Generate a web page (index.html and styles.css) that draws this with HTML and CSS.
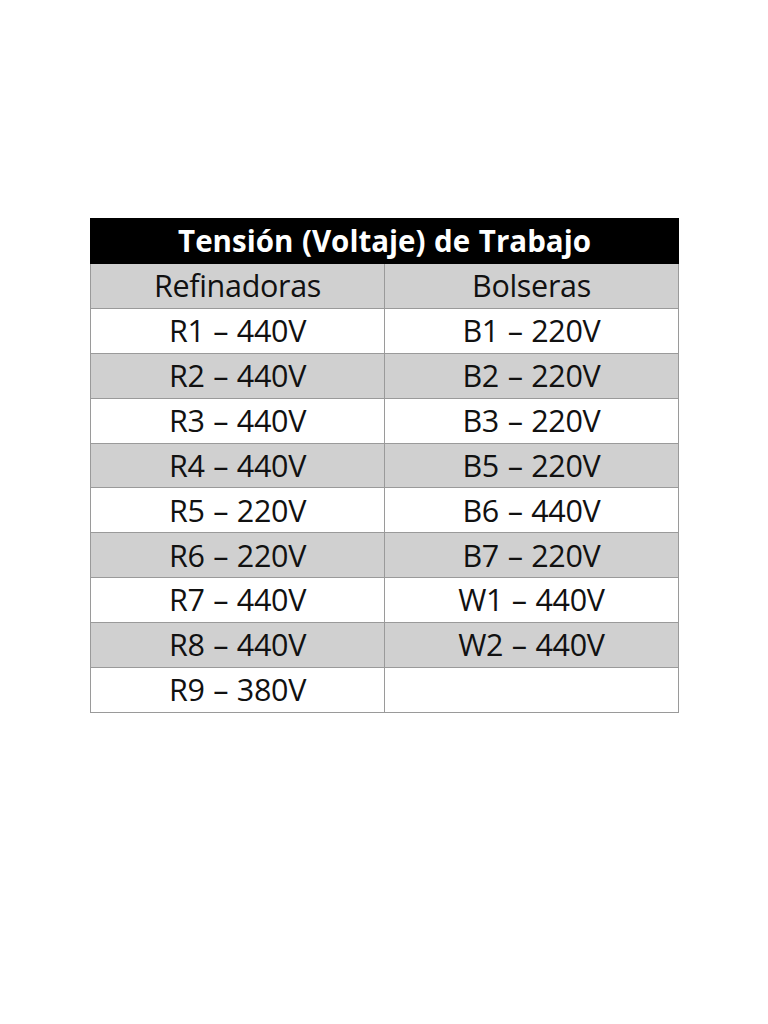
FILE: index.html
```html
<!DOCTYPE html>
<html lang="es">
<head>
<meta charset="utf-8">
<title>Tensión (Voltaje) de Trabajo</title>
<link rel="stylesheet" href="styles.css">
</head>
<body>
<div class="page">
<table class="volt">
  <thead>
    <tr class="title"><th colspan="2">Tensión (Voltaje) de Trabajo</th></tr>
  </thead>
  <tbody>
    <tr class="shade"><td>Refinadoras</td><td>Bolseras</td></tr>
    <tr><td>R1 – 440V</td><td>B1 – 220V</td></tr>
    <tr class="shade"><td>R2 – 440V</td><td>B2 – 220V</td></tr>
    <tr><td>R3 – 440V</td><td>B3 – 220V</td></tr>
    <tr class="shade"><td>R4 – 440V</td><td>B5 – 220V</td></tr>
    <tr><td>R5 – 220V</td><td>B6 – 440V</td></tr>
    <tr class="shade"><td>R6 – 220V</td><td>B7 – 220V</td></tr>
    <tr><td>R7 – 440V</td><td>W1 – 440V</td></tr>
    <tr class="shade"><td>R8 – 440V</td><td>W2 – 440V</td></tr>
    <tr><td>R9 – 380V</td><td></td></tr>
  </tbody>
</table>
</div>
</body>
</html>
```
FILE: styles.css
```css
html, body {
  margin: 0;
  padding: 0;
  background: #ffffff;
}
.page {
  padding-top: 218px;
  padding-left: 90px;
}
.volt {
  border-collapse: collapse;
  width: 589px;
  table-layout: fixed;
  font-family: "Open Sans", "Liberation Sans", sans-serif;
  font-size: 30.5px;
  color: #111111;
}
.volt th, .volt td {
  height: 44.9px;
  padding: 0 0 1px 0;
  text-align: center;
  vertical-align: middle;
  border: 1px solid #9a9a9a;
  line-height: 1;
  letter-spacing: -0.3px;
  word-spacing: 1px;
  width: 50%;
  box-sizing: border-box;
}
.volt .title th {
  background: #000000;
  color: #ffffff;
  font-weight: 700;
  font-size: 29.5px;
  letter-spacing: 0;
  border-color: #000000;
  height: 45px;
}
.volt .shade td {
  background: #d0d0d0;
}
```
